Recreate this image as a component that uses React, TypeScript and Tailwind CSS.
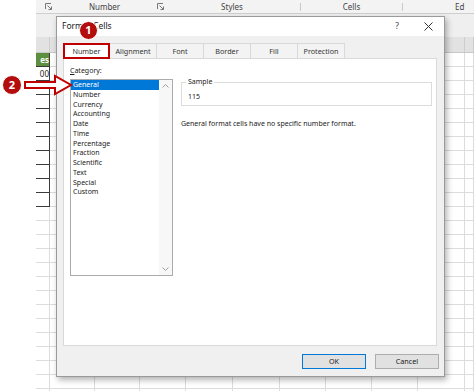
import React from "react";

const colWidths = [
  "w-[14px]",
  "w-[45px]",
  "w-[45px]",
  "w-[46px]",
  "w-[47px]",
  "w-[47px]",
  "w-[46px]",
  "w-[46px]",
  "w-[46px]",
  "w-[47px]",
  "w-[9px]",
];

const categories = [
  "General",
  "Number",
  "Currency",
  "Accounting",
  "Date",
  "Time",
  "Percentage",
  "Fraction",
  "Scientific",
  "Text",
  "Special",
  "Custom",
];

const tabs = ["Number", "Alignment", "Font", "Border", "Fill", "Protection"];

function Launcher() {
  return (
    <svg width="7" height="7" viewBox="0 0 7 7" className="shrink-0">
      <path d="M0.5 6V0.5H6" fill="none" stroke="#777" strokeWidth="1" />
      <path d="M2.5 2.5L6.5 6.5M6.5 3.5V6.5H3.5" fill="none" stroke="#777" strokeWidth="1" />
    </svg>
  );
}

function Chevron({ up }: { up?: boolean }) {
  return (
    <svg width="7" height="4" viewBox="0 0 7 4">
      <path
        d={up ? "M0.5 3.5L3.5 0.5L6.5 3.5" : "M0.5 0.5L3.5 3.5L6.5 0.5"}
        fill="none"
        stroke="#a0a0a0"
        strokeWidth="1"
      />
    </svg>
  );
}

function Sheet() {
  return (
    <div className="flex flex-col">
      {Array.from({ length: 25 }).map((_, r) => (
        <div key={r} className="flex h-[14px] shrink-0">
          {colWidths.map((w, c) => {
            if (c === 0 && r === 0) {
              return (
                <div
                  key={c}
                  className={`${w} shrink-0 bg-[#5e8f3e] border-r border-b border-[#3a3a3a] flex items-center justify-end overflow-hidden text-[8px] font-bold text-white whitespace-nowrap`}
                >
                  es
                </div>
              );
            }
            if (c === 0 && r === 1) {
              return (
                <div
                  key={c}
                  className={`${w} shrink-0 border-r border-b border-[#3a3a3a] flex items-center justify-end overflow-hidden text-[8px] text-[#222] whitespace-nowrap`}
                >
                  00
                </div>
              );
            }
            if (c === 0 && r <= 10) {
              return <div key={c} className={`${w} shrink-0 border-r border-b border-[#3a3a3a]`} />;
            }
            return <div key={c} className={`${w} shrink-0 border-r border-b border-[#dcdcdc]`} />;
          })}
        </div>
      ))}
    </div>
  );
}

function Dialog() {
  return (
    <div className="absolute left-[56px] top-[16px] w-[389px] h-[361px] bg-[#f0f0f0] border border-[#9a9a9a] shadow-[2px_3px_6px_rgba(0,0,0,0.3)] flex flex-col text-[#1a1a1a] z-10">
      {/* title bar */}
      <div className="h-[19px] shrink-0 bg-white flex items-center pl-[5px] text-[8.5px]">
        <span className="flex-1">Format Cells</span>
        <span className="w-[14px] text-center text-[#444] mr-[20px]">?</span>
        <svg width="9" height="9" viewBox="0 0 9 9" className="mr-[11px]">
          <path d="M0.5 0.5L8.5 8.5M8.5 0.5L0.5 8.5" stroke="#333" strokeWidth="1" />
        </svg>
      </div>

      {/* tabs */}
      <div className="mt-[7px] ml-[6px] flex h-[15px] shrink-0 text-[7.2px] text-[#333]">
        {tabs.map((t, i) =>
          i === 0 ? (
            <div
              key={t}
              className="w-[47px] h-[16px] bg-white border-2 border-[#c00000] flex items-center justify-center relative z-10"
            >
              {t}
            </div>
          ) : (
            <div
              key={t}
              className="w-[47px] bg-[#f3f3f3] border-t border-r border-[#d9d9d9] flex items-center justify-center"
            >
              {t}
            </div>
          )
        )}
      </div>

      {/* panel */}
      <div className="ml-[6px] w-[374px] h-[288px] shrink-0 bg-white border border-[#d9d9d9] flex pl-[6px] pt-[5px] text-[7px]">
        <div className="w-[103px] flex flex-col">
          <div className="h-[15px] flex items-center">
            <span>
              <span className="underline">C</span>ategory:
            </span>
          </div>
          <div className="h-[197px] border border-[#ababab] flex">
            <div className="flex-1 flex flex-col">
              {categories.map((c, i) => (
                <div
                  key={c}
                  className={
                    i === 0
                      ? "h-[9.75px] leading-[9.75px] pl-[2px] bg-[#0078d7] text-white"
                      : "h-[9.75px] leading-[9.75px] pl-[2px]"
                  }
                >
                  {c}
                </div>
              ))}
            </div>
            <div className="w-[13px] bg-[#f7f7f7] flex flex-col items-center justify-between py-[4px]">
              <Chevron up />
              <Chevron />
            </div>
          </div>
        </div>

        <div className="ml-[8px] w-[251px] flex flex-col">
          <div className="mt-[18px] h-[24px] border border-[#dcdcdc] relative flex items-center pl-[6px] pt-[6px]">
            <span className="absolute left-[4px] top-[-6px] bg-white px-[2px] leading-[10px]">Sample</span>
            <span>115</span>
          </div>
          <div className="mt-[13px] leading-[10px]">General format cells have no specific number format.</div>
        </div>
      </div>

      {/* footer */}
      <div className="flex-1 flex items-center justify-end pr-[5px] gap-[9px] text-[7.2px]">
        <div className="w-[64px] h-[15px] bg-[#e1e1e1] border border-[#0078d7] flex items-center justify-center">
          OK
        </div>
        <div className="w-[64px] h-[15px] bg-[#e1e1e1] border border-[#adadad] flex items-center justify-center">
          Cancel
        </div>
      </div>
    </div>
  );
}

export default function App() {
  return (
    <div className="w-[474px] h-[391px] relative overflow-hidden bg-white flex font-['Noto_Sans',sans-serif]">
      <div className="w-[36px] shrink-0 bg-white" />

      <div className="flex-1 flex flex-col overflow-hidden">
        {/* ribbon group labels */}
        <div className="h-[14px] shrink-0 bg-[#f3f3f3] border-b border-[#cfcfcf] flex items-center text-[8px] text-[#444] whitespace-nowrap">
          <div className="w-[9px]" />
          <Launcher />
          <div className="w-[105px] text-center">Number</div>
          <Launcher />
          <div className="w-[136px] text-center">Styles</div>
          <div className="w-px h-[8px] bg-[#c8c8c8]" />
          <div className="w-[101px] text-center">Cells</div>
          <div className="w-px h-[8px] bg-[#c8c8c8]" />
          <div className="pl-[52px]">Ed</div>
        </div>

        {/* formula area */}
        <div className="h-[23px] shrink-0 bg-[#efefef]" />

        {/* column headers */}
        <div className="h-[16px] shrink-0 bg-[#e2e2e2] border-b border-[#c8c8c8] flex">
          {colWidths.map((w, c) => (
            <div key={c} className={`${w} shrink-0 border-r border-[#cdcdcd]`} />
          ))}
        </div>

        <Sheet />
      </div>

      <Dialog />

      {/* callout 1 */}
      <div className="absolute left-[79px] top-[21px] w-[19px] h-[19px] rounded-full bg-[#b30d0d] border border-white flex items-center justify-center text-white text-[11px] font-bold z-20">
        1
      </div>

      {/* callout 2 with arrow */}
      <div className="absolute left-[2px] top-[75px] w-[20px] h-[20px] rounded-full bg-[#b30d0d] border border-white flex items-center justify-center text-white text-[11px] font-bold z-20">
        2
      </div>
      <svg className="absolute left-[22px] top-[73px] z-20" width="54" height="24" viewBox="0 0 54 24">
        <polygon
          points="3,9 33,9 33,3 49,12 33,21 33,15 3,15"
          fill="white"
          stroke="#c00000"
          strokeWidth="2"
          strokeLinejoin="miter"
        />
      </svg>
    </div>
  );
}
